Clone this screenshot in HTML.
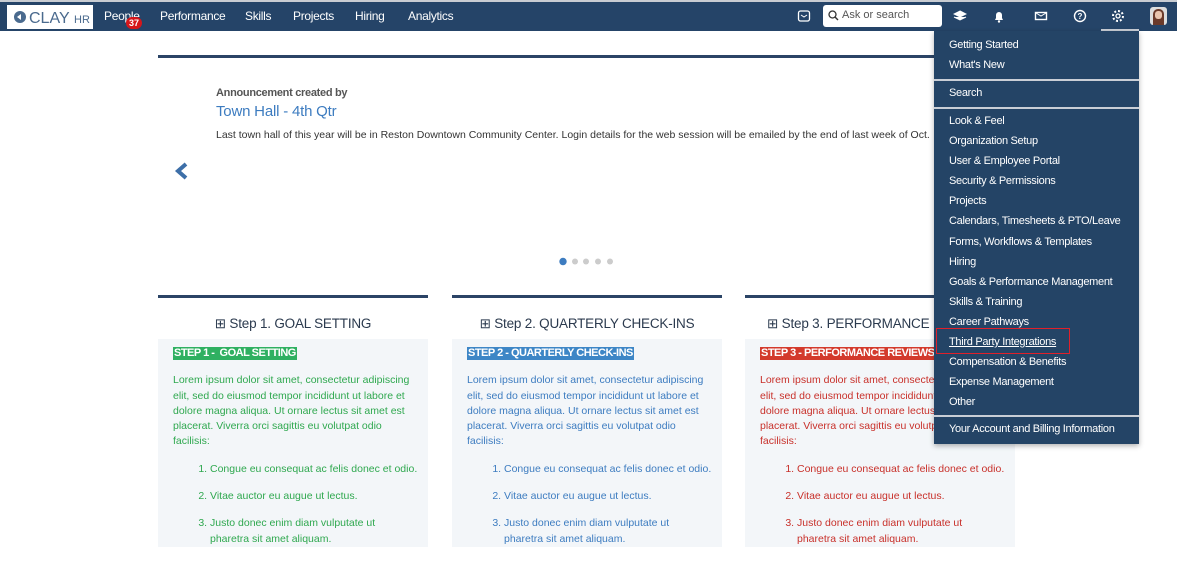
<!DOCTYPE html>
<html><head><meta charset="utf-8"><style>
*{margin:0;padding:0;box-sizing:border-box}
body{width:1177px;height:578px;overflow:hidden;background:#fff;font-family:"Liberation Sans",sans-serif;position:relative;color:#333}
.nav{position:absolute;left:0;top:0;width:1177px;height:31px;background:#254468;border-top:2px solid #c8ccd2}
.nav .lk{position:absolute;top:7px;color:#fff;font-size:12px;letter-spacing:-.3px}
.logo{position:absolute;left:7px;top:3px;width:86px;height:24px;background:#fff}
.ico{position:absolute;top:7px}
.search{position:absolute;left:823px;top:3px;width:119px;height:22px;background:#fff;border-radius:3px;font-size:11px;color:#555;padding:4px 0 0 19px}
.menu{position:absolute;left:934px;top:31px;width:205px;height:413px;background:#244466;box-shadow:0 2px 5px rgba(0,0,0,.3)}
.menu div{position:absolute;left:15px;color:#fff;font-size:11px;letter-spacing:-.3px}
.sep{position:absolute;left:0;width:205px;height:2px;background:#c9ced6}
.card{position:absolute;top:295px;width:270px;border-top:3px solid #2b4466}
.card h3{font-weight:normal;font-size:13.5px;color:#2b3a4e;text-align:center;margin-top:18px;height:23px;letter-spacing:-.2px}
.card .box{background:#f3f6f9;height:208px;padding:7px 15px;font-size:10.5px;line-height:15.3px;white-space:nowrap}
.tag{display:inline-block;color:#fff;font-weight:bold;font-size:11px;letter-spacing:-.5px;line-height:13px;padding:0 1px}
.card ol{margin:12px 0 0 37px}
.card li{margin-bottom:12px}
</style></head><body>
<div class="nav">
 <div class="logo"><svg width="86" height="24"><circle cx="13" cy="12" r="6" fill="#4a6a8e"/><path d="M10 12l4-3v6z" fill="#fff"/><text x="22" y="18" font-family="Liberation Sans" font-size="16" fill="#4a6a8e">CLAY</text><text x="67" y="18" font-family="Liberation Sans" font-size="11" fill="#4a6a8e">HR</text></svg></div>
 <span class="lk" style="left:104px">People</span>
 <span style="position:absolute;left:126px;top:15px;background:#d6161a;color:#fff;font-size:9px;font-weight:bold;border-radius:7px;padding:0 3px;line-height:12px">37</span>
 <span class="lk" style="left:160px">Performance</span>
 <span class="lk" style="left:245px">Skills</span>
 <span class="lk" style="left:293px">Projects</span>
 <span class="lk" style="left:355px">Hiring</span>
 <span class="lk" style="left:408px">Analytics</span>
 <svg class="ico" style="left:797px" width="14" height="14"><rect x="1.5" y="2" width="11" height="10" rx="2" fill="none" stroke="#fff" stroke-width="1.3"/><path d="M4 6l3 2 3-2" stroke="#fff" fill="none"/></svg>
 <div class="search"><svg style="position:absolute;left:5px;top:5px" width="11" height="11"><circle cx="4.5" cy="4.5" r="3.5" stroke="#333" fill="none" stroke-width="1.3"/><path d="M7 7l3 3" stroke="#333" stroke-width="1.4"/></svg>Ask or search</div>
 <svg class="ico" style="left:953px" width="14" height="14"><path d="M7 2l6 3-6 3-6-3z M1 8l6 3 6-3" fill="#fff" stroke="#fff"/></svg>
 <svg class="ico" style="left:992px" width="14" height="14"><path d="M3 11h8l-1-2V6a3 3 0 00-6 0v3z" fill="#fff"/><circle cx="7" cy="12.5" r="1.2" fill="#fff"/></svg>
 <svg class="ico" style="left:1034px" width="14" height="14"><rect x="1.5" y="3.5" width="11" height="7" fill="none" stroke="#fff" stroke-width="1.4"/><path d="M2 4l5 3 5-3" stroke="#fff" fill="none"/></svg>
 <svg class="ico" style="left:1073px" width="14" height="14"><circle cx="7" cy="7" r="5.5" fill="none" stroke="#fff" stroke-width="1.4"/><text x="4.5" y="10" font-size="8" font-weight="bold" fill="#fff" font-family="Liberation Sans">?</text></svg>
 <svg class="ico" style="left:1111px" width="14" height="14"><circle cx="7" cy="7" r="5" fill="none" stroke="#fff" stroke-width="2" stroke-dasharray="2 1.9"/><circle cx="7" cy="7" r="2" fill="none" stroke="#fff" stroke-width="1.3"/></svg>
 <div style="position:absolute;left:1101px;top:27px;width:38px;height:2px;background:#c9ced6"></div>
 <div style="position:absolute;left:1150px;top:5px;width:17px;height:18px;background:#ddd;border-radius:3px;overflow:hidden"><div style="position:absolute;left:3px;top:2px;width:11px;height:16px;background:#6b3a2a;border-radius:5px 5px 0 0"></div><div style="position:absolute;left:5px;top:4px;width:7px;height:8px;background:#e9c4ae;border-radius:3px"></div></div>
</div>

<div style="position:absolute;left:158px;top:55px;width:780px;height:3px;background:#2b4466"></div>
<div style="position:absolute;left:216px;top:87px;font-size:11px;font-weight:bold;color:#555;letter-spacing:-.3px">Announcement created by</div>
<div style="position:absolute;left:216px;top:103px;font-size:15px;color:#3d7cc0;letter-spacing:-.2px">Town Hall - 4th Qtr</div>
<div style="position:absolute;left:216px;top:129px;font-size:10.5px;color:#333;white-space:nowrap;letter-spacing:0">Last town hall of this year will be in Reston Downtown Community Center. Login details for the web session will be emailed by the end of last week of Oct.</div>
<svg style="position:absolute;left:174px;top:162px" width="16" height="18"><path d="M12 2L4 9l8 7" stroke="#3d6fa8" stroke-width="4" fill="none"/></svg>
<svg style="position:absolute;left:558px;top:257px" width="60" height="9"><circle cx="5" cy="4.5" r="3.7" fill="#3d7cc0"/><circle cx="17" cy="4.5" r="3" fill="#ccc"/><circle cx="28" cy="4.5" r="3" fill="#ccc"/><circle cx="40" cy="4.5" r="3" fill="#ccc"/><circle cx="52" cy="4.5" r="3" fill="#ccc"/></svg>

<div class="card" style="left:158px"><h3>⊞ Step 1. GOAL SETTING</h3><div class="box" style="color:#2fa84f"><span class="tag" style="background:#2fb061">STEP 1 -&nbsp; GOAL SETTING</span><p style="margin-top:12px">Lorem ipsum dolor sit amet, consectetur adipiscing<br>elit, sed do eiusmod tempor incididunt ut labore et<br>dolore magna aliqua. Ut ornare lectus sit amet est<br>placerat. Viverra orci sagittis eu volutpat odio<br>facilisis:</p><ol><li>Congue eu consequat ac felis donec et odio.</li><li>Vitae auctor eu augue ut lectus.</li><li>Justo donec enim diam vulputate ut<br>pharetra sit amet aliquam.</li></ol></div></div>
<div class="card" style="left:452px"><h3>⊞ Step 2. QUARTERLY CHECK-INS</h3><div class="box" style="color:#3d7cc0"><span class="tag" style="background:#3d86c6">STEP 2 - QUARTERLY CHECK-INS</span><p style="margin-top:12px">Lorem ipsum dolor sit amet, consectetur adipiscing<br>elit, sed do eiusmod tempor incididunt ut labore et<br>dolore magna aliqua. Ut ornare lectus sit amet est<br>placerat. Viverra orci sagittis eu volutpat odio<br>facilisis:</p><ol><li>Congue eu consequat ac felis donec et odio.</li><li>Vitae auctor eu augue ut lectus.</li><li>Justo donec enim diam vulputate ut<br>pharetra sit amet aliquam.</li></ol></div></div>
<div class="card" style="left:745px"><h3 style="text-align:left;padding-left:22px">⊞ Step 3. PERFORMANCE</h3><div class="box" style="color:#c8302a"><span class="tag" style="background:#d33a2c">STEP 3 - PERFORMANCE REVIEWS</span><p style="margin-top:12px">Lorem ipsum dolor sit amet, consectetur adipiscing<br>elit, sed do eiusmod tempor incididunt ut labore et<br>dolore magna aliqua. Ut ornare lectus sit amet est<br>placerat. Viverra orci sagittis eu volutpat odio<br>facilisis:</p><ol><li>Congue eu consequat ac felis donec et odio.</li><li>Vitae auctor eu augue ut lectus.</li><li>Justo donec enim diam vulputate ut<br>pharetra sit amet aliquam.</li></ol></div></div>

<div class="menu">
 <div style="top:8px">Getting Started</div>
 <div style="top:28px">What's New</div>
 <div class="sep" style="top:48px;left:0"></div>
 <div style="top:56px">Search</div>
 <div class="sep" style="top:76px;left:0"></div>
 <div style="top:84px">Look &amp; Feel</div>
 <div style="top:104px">Organization Setup</div>
 <div style="top:124px">User &amp; Employee Portal</div>
 <div style="top:144px">Security &amp; Permissions</div>
 <div style="top:164px">Projects</div>
 <div style="top:184px">Calendars, Timesheets &amp; PTO/Leave</div>
 <div style="top:205px">Forms, Workflows &amp; Templates</div>
 <div style="top:225px">Hiring</div>
 <div style="top:245px">Goals &amp; Performance Management</div>
 <div style="top:265px">Skills &amp; Training</div>
 <div style="top:285px">Career Pathways</div>
 <div style="top:305px;text-decoration:underline">Third Party Integrations</div>
 <div style="top:297px;left:2px;width:134px;height:26px;border:1.5px solid #e0202a"></div>
 <div style="top:325px">Compensation &amp; Benefits</div>
 <div style="top:345px">Expense Management</div>
 <div style="top:365px">Other</div>
 <div class="sep" style="top:384px;left:0"></div>
 <div style="top:392px">Your Account and Billing Information</div>
</div>
</body></html>
